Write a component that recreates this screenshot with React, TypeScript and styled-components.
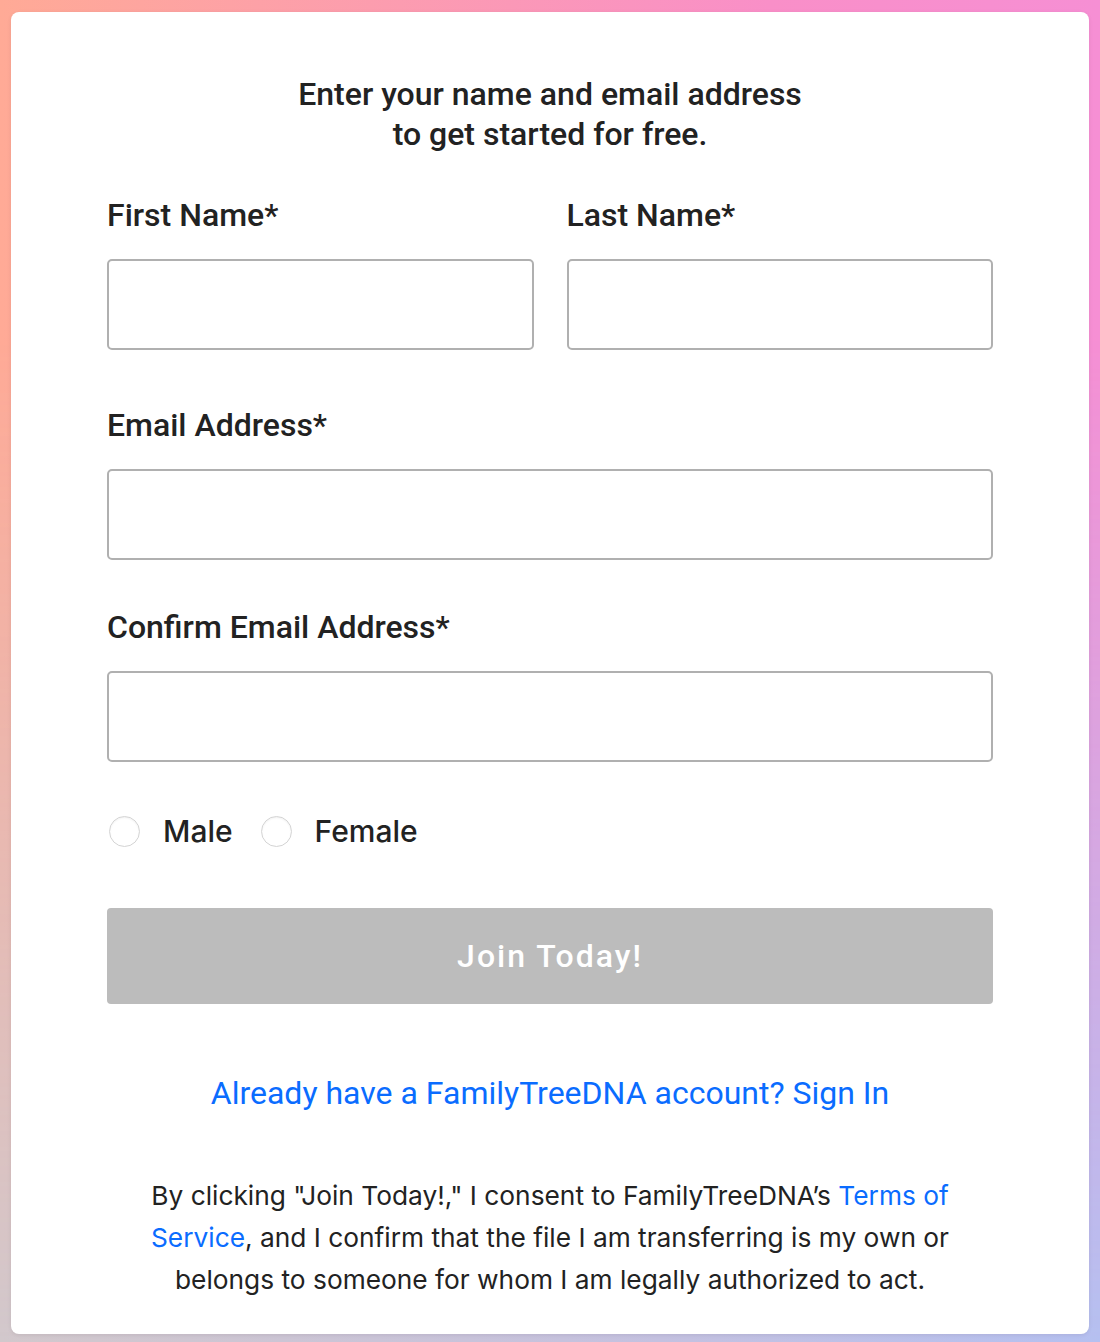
import styled, { createGlobalStyle } from 'styled-components'

const GlobalStyle = createGlobalStyle`
  html, body {
    margin: 0;
    padding: 0;
  }
  body {
    font-family: Roboto, 'Liberation Sans', sans-serif;
    color: #222;
  }
  * {
    box-sizing: border-box;
  }
`

const Page = styled.div`
  position: relative;
  min-height: 1342px;
  padding: 12px 11px 8px 11px;
  background: linear-gradient(to right, #ffaa96 0%, #f98fc8 70%, #f68fd4 100%);

  // lower half fades to the grey / lavender corners
  &::before {
    content: '';
    position: absolute;
    inset: 0;
    background: linear-gradient(to right, #d2c8cc 0%, #c4c1e0 60%, #b5c0f0 100%);
    -webkit-mask-image: linear-gradient(to bottom, transparent 25%, black 100%);
    mask-image: linear-gradient(to bottom, transparent 25%, black 100%);
  }
`

const Card = styled.div`
  position: relative;
  background: #fff;
  border-radius: 8px;
  box-shadow: 0 1px 4px rgba(0, 0, 0, 0.08);
  padding: 62px 96px 33px;
  min-height: 1322px;
`

const Heading = styled.h1`
  margin: 0;
  font-family: Roboto, sans-serif;
  font-weight: 500;
  font-size: 32px;
  line-height: 40px;
  text-align: center;
  color: #222;
`

const Row = styled.div`
  display: grid;
  grid-template-columns: 1fr 1fr;
  column-gap: 33px;
`

const Field = styled.div<{ $top: number }>`
  display: flex;
  flex-direction: column;
  margin-top: ${(p) => p.$top}px;
`

const Label = styled.label`
  font-family: Roboto, sans-serif;
  font-weight: 500;
  font-size: 32px;
  line-height: 36px;
  color: #222;
  margin-bottom: 26px;
`

const Input = styled.input`
  width: 100%;
  height: 91px;
  border: 2px solid #b0b0b0;
  border-radius: 5px;
  background: #fff;
  font-size: 26px;
  padding: 0 18px;
  outline: none;
`

const RadioRow = styled.div`
  display: flex;
  align-items: center;
  margin-top: 51px;
  height: 36px;
`

const RadioOption = styled.label`
  display: flex;
  align-items: center;
  margin-right: 26px;
  font-family: Inter, 'Noto Sans', sans-serif;
  font-weight: 500;
  font-size: 30px;
  color: #222;
`

const RadioCircle = styled.span`
  width: 31px;
  height: 31px;
  border-radius: 50%;
  border: 1.5px solid #d4d4d4;
  background: #fff;
  box-shadow: inset 0 1px 2px rgba(0, 0, 0, 0.06);
  margin-right: 23px;
  margin-left: 2px;
  flex-shrink: 0;
`

const JoinButton = styled.button`
  display: block;
  width: 100%;
  height: 96px;
  margin-top: 59px;
  border: none;
  border-radius: 4px;
  background: #bcbcbc;
  color: #fff;
  font-family: Roboto, sans-serif;
  font-weight: 500;
  font-size: 32px;
  letter-spacing: 2px;
  cursor: default;
`

const SignIn = styled.a`
  display: block;
  margin-top: 71px;
  text-align: center;
  font-family: Roboto, sans-serif;
  font-size: 32px;
  line-height: 36px;
  color: #0a6cff;
  text-decoration: none;
`

const Disclaimer = styled.p`
  margin: 64px 0 0;
  text-align: center;
  font-family: Inter, 'Noto Sans', sans-serif;
  font-size: 26.3px;
  line-height: 42px;
  color: #222;
`

const Link = styled.a`
  color: #0a6cff;
  text-decoration: none;
`

const App = () => {
  return (
    <>
      <GlobalStyle />
      <Page>
        <Card>
          <Heading>
            Enter your name and email address
            <br />
            to get started for free.
          </Heading>
          <Row>
            <Field $top={43}>
              <Label>First Name*</Label>
              <Input type='text' />
            </Field>
            <Field $top={43}>
              <Label>Last Name*</Label>
              <Input type='text' />
            </Field>
          </Row>
          <Field $top={57}>
            <Label>Email Address*</Label>
            <Input type='email' />
          </Field>
          <Field $top={49}>
            <Label>Confirm Email Address*</Label>
            <Input type='email' />
          </Field>
          <RadioRow>
            <RadioOption>
              <RadioCircle />
              Male
            </RadioOption>
            <RadioOption>
              <RadioCircle />
              Female
            </RadioOption>
          </RadioRow>
          <JoinButton>Join Today!</JoinButton>
          <SignIn href='#'>Already have a FamilyTreeDNA account? Sign In</SignIn>
          <Disclaimer>
            By clicking "Join Today!," I consent to FamilyTreeDNA’s{' '}
            <Link href='#'>
              Terms of
              <br />
              Service
            </Link>
            , and I confirm that the file I am transferring is my own or
            <br />
            belongs to someone for whom I am legally authorized to act.
          </Disclaimer>
        </Card>
      </Page>
    </>
  )
}

export default App
